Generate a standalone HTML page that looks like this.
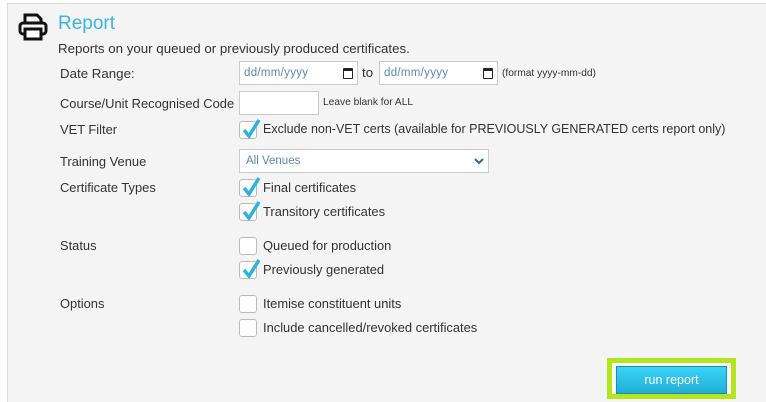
<!DOCTYPE html>
<html><head><style>
html,body{margin:0;width:766px;height:402px;overflow:hidden}
body{background:#fff;font-family:"Liberation Sans",sans-serif;color:#333;position:relative}
.panel{position:absolute;left:7px;top:3px;width:770px;height:410px;background:#f4f4f4;border:1px solid #ddd}
.a{position:absolute;white-space:nowrap}
.lbl{font-size:12.9px;color:#333}
.inp{position:absolute;background:#fff;border:1px solid #ccc;box-sizing:border-box}
.cb{position:absolute;left:239px;width:18px;height:18px;background:#fff;border:1px solid #bbb;border-radius:3px;box-sizing:border-box}
.ck{position:absolute;left:1px;top:-4px}
.small{font-size:10.2px;color:#333}
</style></head><body>
<div class="panel"></div>
<svg class="a" style="left:18px;top:13px" width="30" height="28" viewBox="0 0 30 28"><path d="M7 10V2h12l4 4v4" fill="none" stroke="#111" stroke-width="3"/><rect x="2" y="10" width="26" height="11" rx="3" fill="none" stroke="#111" stroke-width="3"/><rect x="7" y="16" width="16" height="10" fill="#fff" stroke="#111" stroke-width="3"/></svg>
<div class="a" style="left:58px;top:13px;font-size:19px;color:#3cb4e0">Report</div>
<div class="a lbl" style="left:58px;top:41px;font-size:13.3px">Reports on your queued or previously produced certificates.</div>
<div class="a lbl" style="left:60px;top:66px;font-size:13.3px">Date Range:</div>
<div class="inp" style="left:239px;top:61px;width:119px;height:24px"></div>
<div class="a" style="left:244px;top:67px;font-size:11.5px;color:#5a8ab0;letter-spacing:0.3px">dd/mm/yyyy</div>
<div class="a" style="left:343px;top:68px;width:8px;height:7px;border:1.5px solid #222;border-top-width:3px;border-radius:1px"></div>
<div class="a lbl" style="left:362px;top:65px;font-size:13.3px">to</div>
<div class="inp" style="left:379px;top:61px;width:119px;height:24px"></div>
<div class="a" style="left:384px;top:67px;font-size:11.5px;color:#5a8ab0;letter-spacing:0.3px">dd/mm/yyyy</div>
<div class="a" style="left:483px;top:68px;width:8px;height:7px;border:1.5px solid #222;border-top-width:3px;border-radius:1px"></div>
<div class="a small" style="left:502px;top:68px">(format yyyy-mm-dd)</div>
<div class="a lbl" style="left:60px;top:96px;font-size:12.9px">Course/Unit Recognised Code</div>
<div class="inp" style="left:239px;top:91px;width:80px;height:24px"></div>
<div class="a small" style="left:323px;top:97px">Leave blank for ALL</div>
<div class="a lbl" style="left:60px;top:122px">VET Filter</div>
<div class="a lbl" style="left:60px;top:154px">Training Venue</div>
<div class="inp" style="left:239px;top:149px;width:250px;height:24px"></div>
<div class="a" style="left:246px;top:155px;font-size:11.5px;color:#5a8ab0">All Venues</div>
<svg class="a" style="left:474px;top:157px" width="10" height="8"><path d="M1 2l4 4 4-4" fill="none" stroke="#2a6aa0" stroke-width="2"/></svg>
<div class="a lbl" style="left:60px;top:180px">Certificate Types</div>
<div class="a lbl" style="left:60px;top:238px">Status</div>
<div class="a lbl" style="left:60px;top:296px">Options</div>

<div class="cb" style="top:121px"><svg class="ck" width="20" height="22"><path d="M3 12l5 6L18 2" fill="none" stroke="#2bb3dc" stroke-width="3.5"/></svg></div>
<div class="a lbl" style="left:263px;top:122px;font-size:12.5px">Exclude non-VET certs (available for PREVIOUSLY GENERATED certs report only)</div>
<div class="cb" style="top:179px"><svg class="ck" width="20" height="22"><path d="M3 12l5 6L18 2" fill="none" stroke="#2bb3dc" stroke-width="3.5"/></svg></div>
<div class="a lbl" style="left:263px;top:180px">Final certificates</div>
<div class="cb" style="top:203px"><svg class="ck" width="20" height="22"><path d="M3 12l5 6L18 2" fill="none" stroke="#2bb3dc" stroke-width="3.5"/></svg></div>
<div class="a lbl" style="left:263px;top:204px">Transitory certificates</div>
<div class="cb" style="top:237px"></div>
<div class="a lbl" style="left:263px;top:238px">Queued for production</div>
<div class="cb" style="top:261px"><svg class="ck" width="20" height="22"><path d="M3 12l5 6L18 2" fill="none" stroke="#2bb3dc" stroke-width="3.5"/></svg></div>
<div class="a lbl" style="left:263px;top:262px">Previously generated</div>
<div class="cb" style="top:295px"></div>
<div class="a lbl" style="left:263px;top:296px">Itemise constituent units</div>
<div class="cb" style="top:319px"></div>
<div class="a lbl" style="left:263px;top:320px">Include cancelled/revoked certificates</div>

<div class="a" style="left:607px;top:358px;width:119px;height:31px;border:5px solid #b5e61d;background:#fafafa"></div>
<div class="a" style="left:616px;top:366px;width:109px;height:26px;border:1px solid #1a8fb3;background:linear-gradient(#3ad4f8,#22aed6);color:#fff;font-size:12.5px;text-align:center;line-height:26px">run report</div>
</body></html>
